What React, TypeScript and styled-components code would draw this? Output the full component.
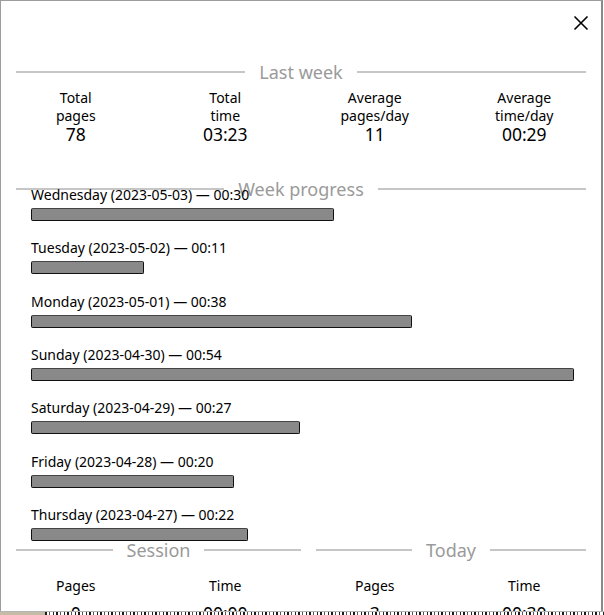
import React from 'react';
import styled, { createGlobalStyle } from 'styled-components';

type Stat = { label: string; value: string };
type Day = { label: string; width: number };

const lastWeek: Stat[] = [
    { label: 'Total\npages', value: '78' },
    { label: 'Total\ntime', value: '03:23' },
    { label: 'Average\npages/day', value: '11' },
    { label: 'Average\ntime/day', value: '00:29' },
];

const current: Stat[] = [
    { label: 'Pages', value: '0' },
    { label: 'Time', value: '00:00' },
    { label: 'Pages', value: '3' },
    { label: 'Time', value: '00:30' },
];

// bar widths in px, Sunday is the longest
const days: Day[] = [
    { label: 'Wednesday (2023-05-03) — 00:30', width: 303 },
    { label: 'Tuesday (2023-05-02) — 00:11', width: 113 },
    { label: 'Monday (2023-05-01) — 00:38', width: 381 },
    { label: 'Sunday (2023-04-30) — 00:54', width: 543 },
    { label: 'Saturday (2023-04-29) — 00:27', width: 269 },
    { label: 'Friday (2023-04-28) — 00:20', width: 203 },
    { label: 'Thursday (2023-04-27) — 00:22', width: 217 },
];

const GlobalStyle = createGlobalStyle`
    html, body {
        margin: 0;
        padding: 0;
        background: #fff;
    }
    body {
        font-family: 'Noto Sans', 'DejaVu Sans', sans-serif;
        color: #000;
    }
`;

const CloseIcon = () => (
    <svg width="16" height="16" viewBox="0 0 16 16">
        <path d="M1.5 1.5 L14.5 14.5 M14.5 1.5 L1.5 14.5" stroke="#000" strokeWidth="1.6" fill="none" />
    </svg>
);

export default function App() {
    return (
        <>
            <GlobalStyle />
            <Screen>
                <Frame>
                    <Header>
                        <CloseButton>
                            <CloseIcon />
                        </CloseButton>
                    </Header>

                    <Title>
                        <Rule />
                        <TitleText>Last week</TitleText>
                        <Rule />
                    </Title>
                    <StatsGrid>
                        {lastWeek.map((s, i) => (
                            <StatCell key={i}>
                                <StatLabel>{s.label}</StatLabel>
                                <StatValue>{s.value}</StatValue>
                            </StatCell>
                        ))}
                    </StatsGrid>

                    <Title $overlap>
                        <Rule />
                        <TitleText>Week progress</TitleText>
                        <Rule />
                    </Title>
                    <DayList>
                        {days.map((d) => (
                            <DayRow key={d.label}>
                                <DayLabel>{d.label}</DayLabel>
                                <Bar style={{ width: d.width }} />
                            </DayRow>
                        ))}
                    </DayList>

                    <HalfTitles>
                        <Title $half>
                            <Rule />
                            <TitleText>Session</TitleText>
                            <Rule />
                        </Title>
                        <Title $half>
                            <Rule />
                            <TitleText>Today</TitleText>
                            <Rule />
                        </Title>
                    </HalfTitles>
                    <StatsGrid $bottom>
                        {current.map((s, i) => (
                            <StatCell key={i}>
                                <StatLabel>{s.label}</StatLabel>
                                <StatValue $gap>{s.value}</StatValue>
                            </StatCell>
                        ))}
                    </StatsGrid>
                </Frame>
                <BottomStrip>
                    <StripLeft />
                    <StripNoise />
                </BottomStrip>
            </Screen>
        </>
    );
}

const Screen = styled.div`
    width: 604px;
    height: 615px;
    display: flex;
    flex-direction: column;
    overflow: hidden;
`;

const Frame = styled.div`
    flex: 1;
    min-height: 0;
    width: 603px;
    box-sizing: border-box;
    border-top: 1px solid #9c9c9c;
    border-left: 1px solid #9c9c9c;
    border-right: 2px solid #8a8a8a;
    overflow: hidden;
    display: flex;
    flex-direction: column;
    & > * {
        flex-shrink: 0;
    }
`;

const Header = styled.div`
    height: 58px;
    box-sizing: border-box;
    display: flex;
    justify-content: flex-end;
    padding: 13px 12px 0 0;
`;

const CloseButton = styled.div`
    width: 16px;
    height: 16px;
`;

const Title = styled.div<{ $overlap?: boolean; $half?: boolean }>`
    display: flex;
    align-items: center;
    height: 26px;
    margin: ${({ $overlap }) => ($overlap ? '33px 15px -16px 15px' : '0 15px')};
    ${({ $half }) => ($half ? 'margin: 0; flex: 1;' : '')}
`;

const Rule = styled.div`
    flex: 1;
    height: 2px;
    background: #c6c6c6;
`;

const TitleText = styled.div`
    padding: 0 14px;
    font-size: 18px;
    line-height: 26px;
    color: #9a9a9a;
    white-space: nowrap;
`;

const StatsGrid = styled.div<{ $bottom?: boolean }>`
    display: grid;
    grid-template-columns: repeat(4, 149.5px);
    margin-top: ${({ $bottom }) => ($bottom ? '14px' : '4px')};
`;

const StatCell = styled.div`
    display: flex;
    flex-direction: column;
    align-items: center;
    text-align: center;
`;

const StatLabel = styled.div`
    font-size: 14px;
    line-height: 18px;
    white-space: pre-line;
`;

const StatValue = styled.div<{ $gap?: boolean }>`
    font-size: 17.5px;
    line-height: 18px;
    margin-top: ${({ $gap }) => ($gap ? '9px' : '0')};
`;

const DayList = styled.div`
    display: flex;
    flex-direction: column;
    gap: 18.33px;
    padding-left: 30px;
`;

const DayRow = styled.div`
    display: flex;
    flex-direction: column;
    align-items: flex-start;
`;

const DayLabel = styled.div`
    font-size: 14px;
    line-height: 18px;
    white-space: nowrap;
`;

const Bar = styled.div`
    margin-top: 4px;
    height: 13px;
    box-sizing: border-box;
    background: #898989;
    border: 1px solid #111;
    border-top-color: #444;
    border-radius: 2px;
`;

const HalfTitles = styled.div`
    display: flex;
    gap: 15px;
    margin: -4px 15px 0 15px;
    & > :first-child {
        flex: 0 0 285px;
    }
`;

const BottomStrip = styled.div`
    height: 4px;
    flex: none;
    display: flex;
    border-top: 1px solid #b4b4b4;
    box-sizing: border-box;
`;

const StripLeft = styled.div`
    width: 45px;
    background: #c4bca6;
`;

const StripNoise = styled.div`
    flex: 1;
    background: repeating-linear-gradient(
        90deg,
        #1a1a1a 0 2px,
        #ffffff 2px 4px,
        #555 4px 5px,
        #fff 5px 8px,
        #222 8px 9px,
        #fff 9px 11px
    );
`;
